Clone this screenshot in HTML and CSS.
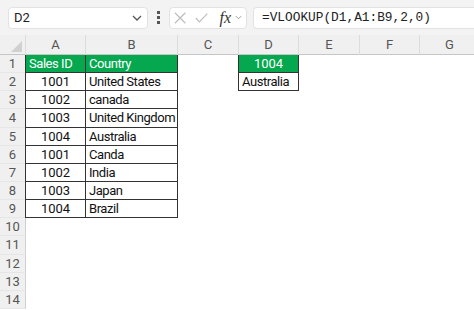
FILE: index.html
```html
<!DOCTYPE html>
<html lang="en">
<head>
<meta charset="UTF-8">
<title>VLOOKUP</title>
<link rel="stylesheet" href="styles.css">
</head>
<body>
<div class="toolbar">
	<div class="namebox">
		<span class="name">D2</span>
		<svg class="chev" width="10" height="6" viewBox="0 0 10 6"><path d="M1 1 L5 5 L9 1" fill="none" stroke="#555" stroke-width="1.3"/></svg>
	</div>
	<div class="dots"><i></i><i></i><i></i></div>
	<div class="fxbox">
		<svg width="14" height="14" viewBox="0 0 14 14"><path d="M1 1 L13 13 M13 1 L1 13" stroke="#bdbdbd" stroke-width="1.3"/></svg>
		<svg width="15" height="12" viewBox="0 0 15 12"><path d="M1 6 L5 10.5 L14 1" fill="none" stroke="#bdbdbd" stroke-width="1.3"/></svg>
		<span class="fx">fx</span>
		<svg width="8" height="5" viewBox="0 0 8 5"><path d="M1 1 L4 4 L7 1" fill="none" stroke="#999" stroke-width="1.1"/></svg>
	</div>
	<div class="formula">=VLOOKUP(D1,A1:B9,2,0)</div>
</div>

<div class="sheet">
	<div class="row head">
		<div class="corner"><svg width="11" height="11" viewBox="0 0 11 11"><path d="M11 0 L11 11 L0 11 Z" fill="#d0d0d0"/></svg></div>
		<div class="col">A</div><div class="col">B</div><div class="col">C</div><div class="col">D</div><div class="col">E</div><div class="col">F</div><div class="col">G</div>
	</div>
	<div class="row">
		<div class="rh">1</div>
		<div class="c t a g">Sales ID</div><div class="c t g">Country</div><div class="c"></div>
		<div class="c t a g mid">1004</div><div class="c"></div><div class="c"></div><div class="c"></div>
	</div>
	<div class="row">
		<div class="rh">2</div>
		<div class="c t a mid">1001</div><div class="c t">United States</div><div class="c"></div>
		<div class="c t a">Australia</div><div class="c"></div><div class="c"></div><div class="c"></div>
	</div>
	<div class="row">
		<div class="rh">3</div>
		<div class="c t a mid">1002</div><div class="c t">canada</div><div class="c"></div><div class="c"></div><div class="c"></div><div class="c"></div><div class="c"></div>
	</div>
	<div class="row">
		<div class="rh">4</div>
		<div class="c t a mid">1003</div><div class="c t">United Kingdom</div><div class="c"></div><div class="c"></div><div class="c"></div><div class="c"></div><div class="c"></div>
	</div>
	<div class="row">
		<div class="rh">5</div>
		<div class="c t a mid">1004</div><div class="c t">Australia</div><div class="c"></div><div class="c"></div><div class="c"></div><div class="c"></div><div class="c"></div>
	</div>
	<div class="row">
		<div class="rh">6</div>
		<div class="c t a mid">1001</div><div class="c t">Canda</div><div class="c"></div><div class="c"></div><div class="c"></div><div class="c"></div><div class="c"></div>
	</div>
	<div class="row">
		<div class="rh">7</div>
		<div class="c t a mid">1002</div><div class="c t">India</div><div class="c"></div><div class="c"></div><div class="c"></div><div class="c"></div><div class="c"></div>
	</div>
	<div class="row">
		<div class="rh">8</div>
		<div class="c t a mid">1003</div><div class="c t">Japan</div><div class="c"></div><div class="c"></div><div class="c"></div><div class="c"></div><div class="c"></div>
	</div>
	<div class="row">
		<div class="rh">9</div>
		<div class="c t a mid">1004</div><div class="c t">Brazil</div><div class="c"></div><div class="c"></div><div class="c"></div><div class="c"></div><div class="c"></div>
	</div>
	<div class="row"><div class="rh">10</div></div>
	<div class="row"><div class="rh">11</div></div>
	<div class="row"><div class="rh">12</div></div>
	<div class="row"><div class="rh">13</div></div>
	<div class="row"><div class="rh">14</div></div>
</div>
</body>
</html>
```

FILE: styles.css
```css
body {
	margin: 0;
	background: #ffffff;
	font-family: Roboto, sans-serif;
	overflow: hidden;
}
.toolbar {
	display: flex;
	align-items: center;
	height: 35px;
	padding: 0 0 0 8px;
	background: #f3f3f3;
}
.namebox {
	display: flex;
	align-items: center;
	justify-content: space-between;
	width: 140px;
	height: 22px;
	box-sizing: border-box;
	padding: 0 5px 0 5px;
	background: #ffffff;
	border: 1px solid #e2e2e2;
	border-radius: 4px;
	font-size: 13px;
	color: #222;
}
.dots {
	display: flex;
	flex-direction: column;
	gap: 2px;
	margin: 0 9px 0 9px;
}
.dots i {
	display: block;
	width: 3px;
	height: 3px;
	background: #555;
}
.fxbox {
	display: flex;
	align-items: center;
	gap: 9px;
	width: 78px;
	height: 22px;
	box-sizing: border-box;
	padding: 0 4px 0 4px;
	background: #ffffff;
	border: 1px solid #e2e2e2;
	border-radius: 4px;
}
.fx {
	font-family: 'Liberation Serif', serif;
	font-style: italic;
	font-size: 16px;
	color: #333;
	margin-left: 2px;
	margin-right: -5px;
}
.formula {
	flex: 1;
	height: 22px;
	box-sizing: border-box;
	margin-left: 6px;
	padding: 2px 0 0 8px;
	background: #ffffff;
	border: 1px solid #e2e2e2;
	border-right: none;
	border-radius: 4px 0 0 4px;
	font-family: 'Liberation Mono', monospace;
	font-size: 12.8px;
	color: #222;
}
.row {
	display: grid;
	grid-template-columns: 26px 60px 92px 61px 60px 61px 60px 60px;
	height: 18.15px;
	font-size: 13px;
	line-height: 17px;
	color: #111;
}
.head {
	height: 19px;
	line-height: 20px;
	background: #f0f0f0;
	border-bottom: 1px solid #c6c6c6;
	color: #555;
	font-size: 13px;
}
.corner {
	display: flex;
	align-items: flex-end;
	justify-content: flex-end;
	padding: 0 3px 3px 0;
	border-right: 1px solid #dcdcdc;
}
.col {
	text-align: center;
	border-right: 1px solid #dcdcdc;
}
.rh {
	background: #f0f0f0;
	color: #555;
	text-align: center;
	font-size: 13px;
	border-right: 1px solid #d0d0d0;
	border-bottom: 1px solid #e6e6e6;
}
.c {
	padding-left: 3px;
	white-space: nowrap;
	letter-spacing: -0.45px;
}
.t {
	border-right: 1px solid #333;
	border-bottom: 1px solid #333;
}
.a {
	border-left: 1px solid #333;
	margin-left: -1px;
}
.mid {
	text-align: center;
	padding-left: 0;
	letter-spacing: 0;
}
.g {
	background: #05a84f;
	color: #ffffff;
}
```
